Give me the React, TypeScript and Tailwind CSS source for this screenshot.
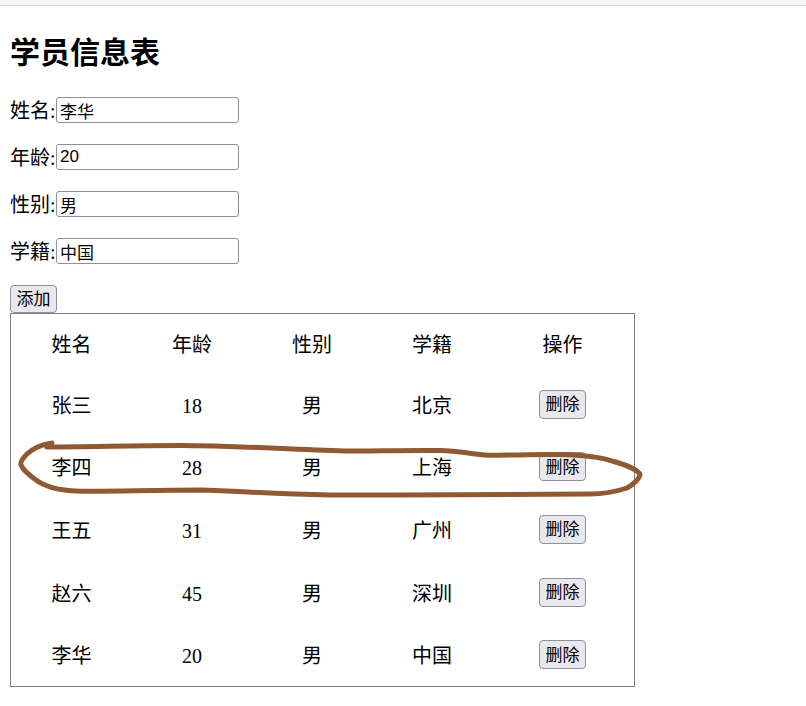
const cjk = "font-['Liberation_Serif','Noto_Sans_CJK_SC',serif]";

const students = [
  { name: "张三", age: 18, sex: "男", home: "北京" },
  { name: "李四", age: 28, sex: "男", home: "上海" },
  { name: "王五", age: 31, sex: "男", home: "广州" },
  { name: "赵六", age: 45, sex: "男", home: "深圳" },
  { name: "李华", age: 20, sex: "男", home: "中国" },
];

const fields = [
  { label: "姓名", value: "李华" },
  { label: "年龄", value: "20" },
  { label: "性别", value: "男" },
  { label: "学籍", value: "中国" },
];

const btn =
  "rounded-[4px] border border-[#8f8f9d] bg-[#e9e9ed] text-[17px] leading-none text-black";

export default function App() {
  return (
    <div className={`relative min-h-[706px] bg-white text-[20px] text-black ${cjk}`}>
      <div className="h-[6px] border-b border-[#d4d4d4] bg-[#f6f6f8]" />
      <div className="px-[10px]">
        <h1 className="pt-[29px] text-[30px] font-bold leading-[36px]">学员信息表</h1>
        <div className="mt-[26px] flex flex-col gap-[21px]">
          {fields.map((f) => (
            <div key={f.label} className="flex h-[26px] items-center">
              <span className="w-[46px] pt-[2px]">{f.label}:</span>
              <input
                readOnly
                value={f.value}
                className="h-[26px] w-[183px] rounded-[3px] border border-[#8f8f9d] px-[3px] font-['Liberation_Sans','Noto_Sans_CJK_SC',sans-serif] text-[17px] outline-none"
              />
            </div>
          ))}
        </div>
        <button className={`mt-[21px] block h-7 w-[47px] ${btn}`}>添加</button>
        <table className="w-[625px] table-fixed border-separate border-spacing-0 border border-[#808080] text-center">
          <colgroup>
            <col className="w-[121px]" />
            <col className="w-[120px]" />
            <col className="w-[120px]" />
            <col className="w-[120px]" />
            <col />
          </colgroup>
          <tbody>
            <tr className="h-[59px]">
              <td className="pt-[3px]">姓名</td>
              <td className="pt-[3px]">年龄</td>
              <td className="pt-[3px]">性别</td>
              <td className="pt-[3px]">学籍</td>
              <td className="pr-px pt-[3px]">操作</td>
            </tr>
            {students.map((s) => (
              <tr key={s.name} className="h-[62.6px]">
                <td className="pt-[3px]">{s.name}</td>
                <td className="pt-[3px]">{s.age}</td>
                <td className="pt-[3px]">{s.sex}</td>
                <td className="pt-[3px]">{s.home}</td>
                <td className="pr-px">
                  <button className={`mx-auto block h-[29px] w-[47px] pt-px ${btn}`}>删除</button>
                </td>
              </tr>
            ))}
          </tbody>
        </table>
      </div>
      {/* hand drawn circle over the 李四 row */}
      <svg className="pointer-events-none absolute left-0 top-0" width="806" height="706" fill="none">
        <path
          d="M52 443 C42 444 32 449 27 454 C23 458 20 462 21 465 C23 470 29 475 36 480 C44 486 56 490 75 491 C100 492 150 490 200 490 C240 491 270 494 330 495 C420 495 520 495 590 494 C605 494 618 491 627 488 C634 484 640 478 640 474 C636 469 627 465 612 461 C600 457 585 455 560 454.500 C530 454 500 456 485 455 C470 454 460 451 440 450.500 C400 450 370 451.500 350 451 C300 450 250 446 180 445.500 C130 445.500 90 447 47 447"
          stroke="#8f5a33"
          strokeWidth="5"
          strokeLinecap="round"
          strokeLinejoin="round"
        />
      </svg>
    </div>
  );
}
